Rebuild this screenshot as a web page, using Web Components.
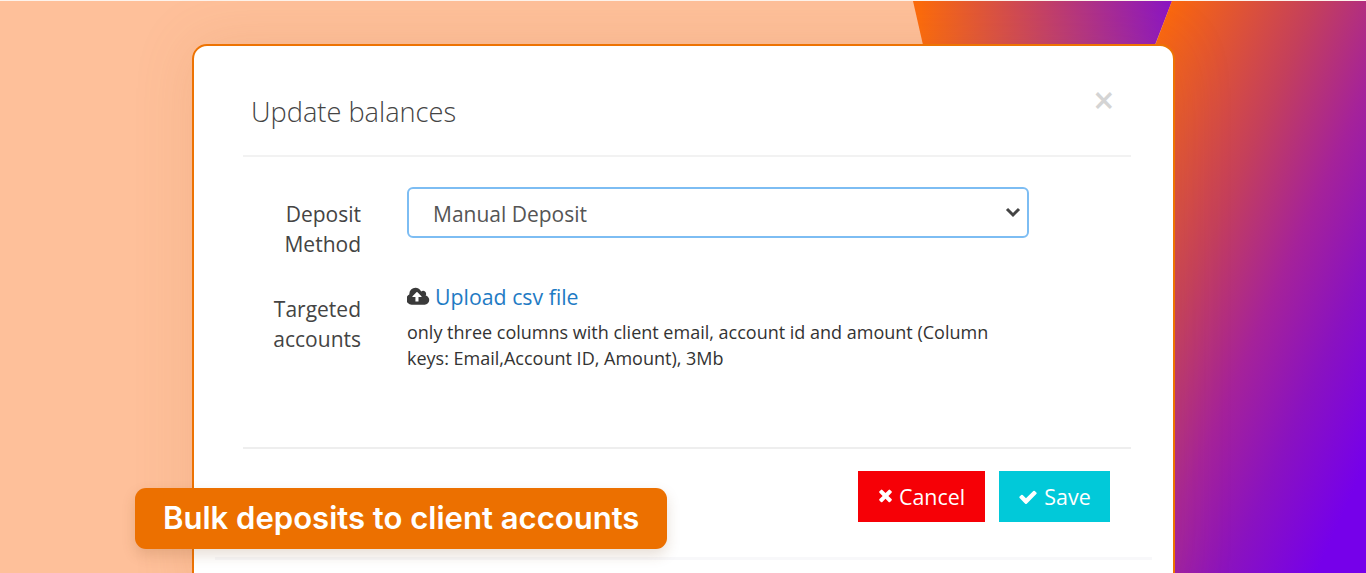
<!DOCTYPE html>
<html><head><meta charset="utf-8">
<style>
html,body{margin:0;padding:0;height:573px;overflow:hidden;background:#fff}
</style></head><body>
<template id="t-hero"><style>
:host{display:block;position:relative;width:1366px;height:573px;overflow:hidden;background:#fec09a;box-sizing:border-box;padding:44px 0 0 192px}
.band,.corner{position:absolute;top:1px;bottom:0}
.band{left:913px;width:259px;clip-path:polygon(0 0,259px 0,242px 44px,10px 44px);background:linear-gradient(90deg,#fb6a0c 0%,#fb6a0c 3%,#8a15c4 100%)}
.corner{left:1130px;right:0;clip-path:polygon(42px 0,100% 0,100% 100%,0 100%,0 110px);background:linear-gradient(114deg,#fb680c 8%,#c43f5c 38%,#a5229a 56%,#8a12c0 72%,#7600ea 90%)}
.top{position:absolute;left:0;right:0;top:0;height:1px;background:#fdf3ec}
::slotted(x-modal){position:relative}
</style><div class="top"></div><div class="band"></div><div class="corner"></div><slot></slot></template>

<template id="t-modal"><style>
:host{display:block;width:983px;height:560px;box-sizing:border-box;background:#fff;border:2px solid #ed7303;border-radius:15px;box-shadow:0 0 60px rgba(190,110,60,.16);padding:0 42px 0 49px;font-family:"Open Sans",sans-serif;color:#333}
.head{height:109px;display:flex;position:relative;border-bottom:2px solid #f2f2f2;padding-left:8px;align-items:flex-start}
h2{margin:46px 0 0;font-size:27.2px;font-weight:300;line-height:40px;color:#444}
.x{position:absolute;right:16.5px;top:34px;font:600 37px/40px "Open Sans",sans-serif;color:#d4d4d4}
.body{height:290px;box-sizing:border-box;padding-top:30px;display:flex;flex-direction:column;gap:23px}
.foot{border-top:2px solid #eee;display:flex;justify-content:flex-end;gap:14px;padding:22px 21px 0 0}
.rule{margin:35px -21px 0 -28px;height:3px;background:#f8f8fa}
</style><div class="head"><h2>Update balances</h2><span class="x">×</span></div>
<div class="body"><slot name="body"></slot></div>
<div class="foot"><slot name="foot"></slot></div>
<div class="rule"></div></template>

<template id="t-row"><style>
:host{display:grid;grid-template-columns:118px 622px;column-gap:46px;font-family:"Open Sans",sans-serif}
.l{font-size:21px;line-height:30px;text-align:right;color:#444;padding-top:12px}
</style><div class="l"><slot name="label"></slot></div><div><slot></slot></div></template>

<template id="t-select"><style>
:host{display:flex;align-items:center;justify-content:space-between;height:51px;box-sizing:border-box;border:2px solid #7dbdf3;border-radius:6px;padding:3px 5px 0 24px;font-size:21px;color:#555;background:#fff}
svg{width:18px;height:12px;display:block;margin-top:-4px}
</style><slot></slot><svg viewBox="0 0 18 12"><path d="M3 3l6 6 6-6" fill="none" stroke="#444" stroke-width="3"/></svg></template>

<template id="t-upload"><style>
:host{display:block}
.link{display:flex;align-items:center;gap:5px;font-size:21.3px;line-height:30px;color:#1f7bc4}
svg{width:23px;height:22px;fill:#3a3a3a;display:block}
p{margin:8px 0 0;font-size:18px;line-height:25.6px;color:#333;width:590px}
</style><div class="link"><svg viewBox="0 0 1920 1792"><path d="M1216 864q0-14-9-23l-352-352q-9-9-23-9t-23 9l-351 351q-10 12-10 24 0 14 9 23t23 9h224v352q0 13 9.5 22.5t22.5 9.5h192q13 0 22.5-9.5t9.5-22.5v-352h224q13 0 22.5-9.5t9.5-22.5zm640 288q0 159-112.5 271.5t-271.5 112.5h-1088q-185 0-316.5-131.5t-131.5-316.5q0-130 70-240t188-165q-2-30-2-43 0-212 150-362t362-150q156 0 285.5 87t188.5 231q71-62 166-62 106 0 181 75t75 181q0 76-41 138 130 31 213.5 135.5t83.5 238.5z"/></svg><span>Upload csv file</span></div><p><slot></slot></p></template>

<template id="t-btn"><style>
:host{display:flex;align-items:center;justify-content:center;gap:6px;height:51px;box-sizing:border-box;font-family:"Open Sans",sans-serif;font-size:21.4px;color:#fff}
:host([kind=cancel]){width:127px;background:#f60006}
:host([kind=save]){width:111px;background:#01c9d9}
svg{display:block;fill:#fff;height:18px}
</style><svg></svg><slot></slot></template>

<template id="t-badge"><style>
:host{position:absolute;left:135px;top:487.5px;width:532px;height:61.5px;box-sizing:border-box;display:flex;align-items:center;padding:0 0 2px 28px;background:#ec7000;border-radius:11px;box-shadow:0 6px 14px rgba(120,70,30,.18);font:600 31.05px "Inter",sans-serif;color:#fff;white-space:nowrap}
</style><slot></slot></template>

<x-hero>
  <x-modal>
    <x-row slot="body"><span slot="label">Deposit Method</span><x-select>Manual Deposit</x-select></x-row>
    <x-row slot="body"><span slot="label">Targeted accounts</span><x-upload>only three columns with client email, account id and amount (Column keys: Email,Account ID, Amount), 3Mb</x-upload></x-row>
    <x-btn slot="foot" kind="cancel">Cancel</x-btn>
    <x-btn slot="foot" kind="save">Save</x-btn>
  </x-modal>
  <x-badge>Bulk deposits to client accounts</x-badge>
</x-hero>
<script>
const ICONS={cancel:['0 0 1408 1792','M1298 1202q0 40-28 68l-136 136q-28 28-68 28t-68-28l-294-294-294 294q-28 28-68 28t-68-28l-136-136q-28-28-28-68t28-68l294-294-294-294q-28-28-28-68t28-68l136-136q28-28 68-28t68 28l294 294 294-294q28-28 68-28t68 28l136 136q28 28 28 68t-28 68l-294 294 294 294q28 28 28 68z',15],
save:['0 0 1792 1792','M1671 566q0 40-28 68l-724 724-136 136q-28 28-68 28t-68-28l-136-136-362-362q-28-28-28-68t28-68l136-136q28-28 68-28t68 28l294 295 656-657q28-28 68-28t68 28l136 136q28 28 28 68z',20]};
for(const n of ['hero','modal','row','select','upload','btn','badge']){
  customElements.define('x-'+n,class extends HTMLElement{
    constructor(){super();const r=this.attachShadow({mode:'open'});r.appendChild(document.getElementById('t-'+n).content.cloneNode(true));}
    connectedCallback(){if(n==='btn'){const i=ICONS[this.getAttribute('kind')],s=this.shadowRoot.querySelector('svg');s.setAttribute('viewBox',i[0]);s.innerHTML='<path d="'+i[1]+'"/>';s.style.width=i[2]+'px';s.style.height=i[2]*(i[0].split(' ')[3]/i[0].split(' ')[2])+'px';}}
  });
}
</script>
</body></html>
